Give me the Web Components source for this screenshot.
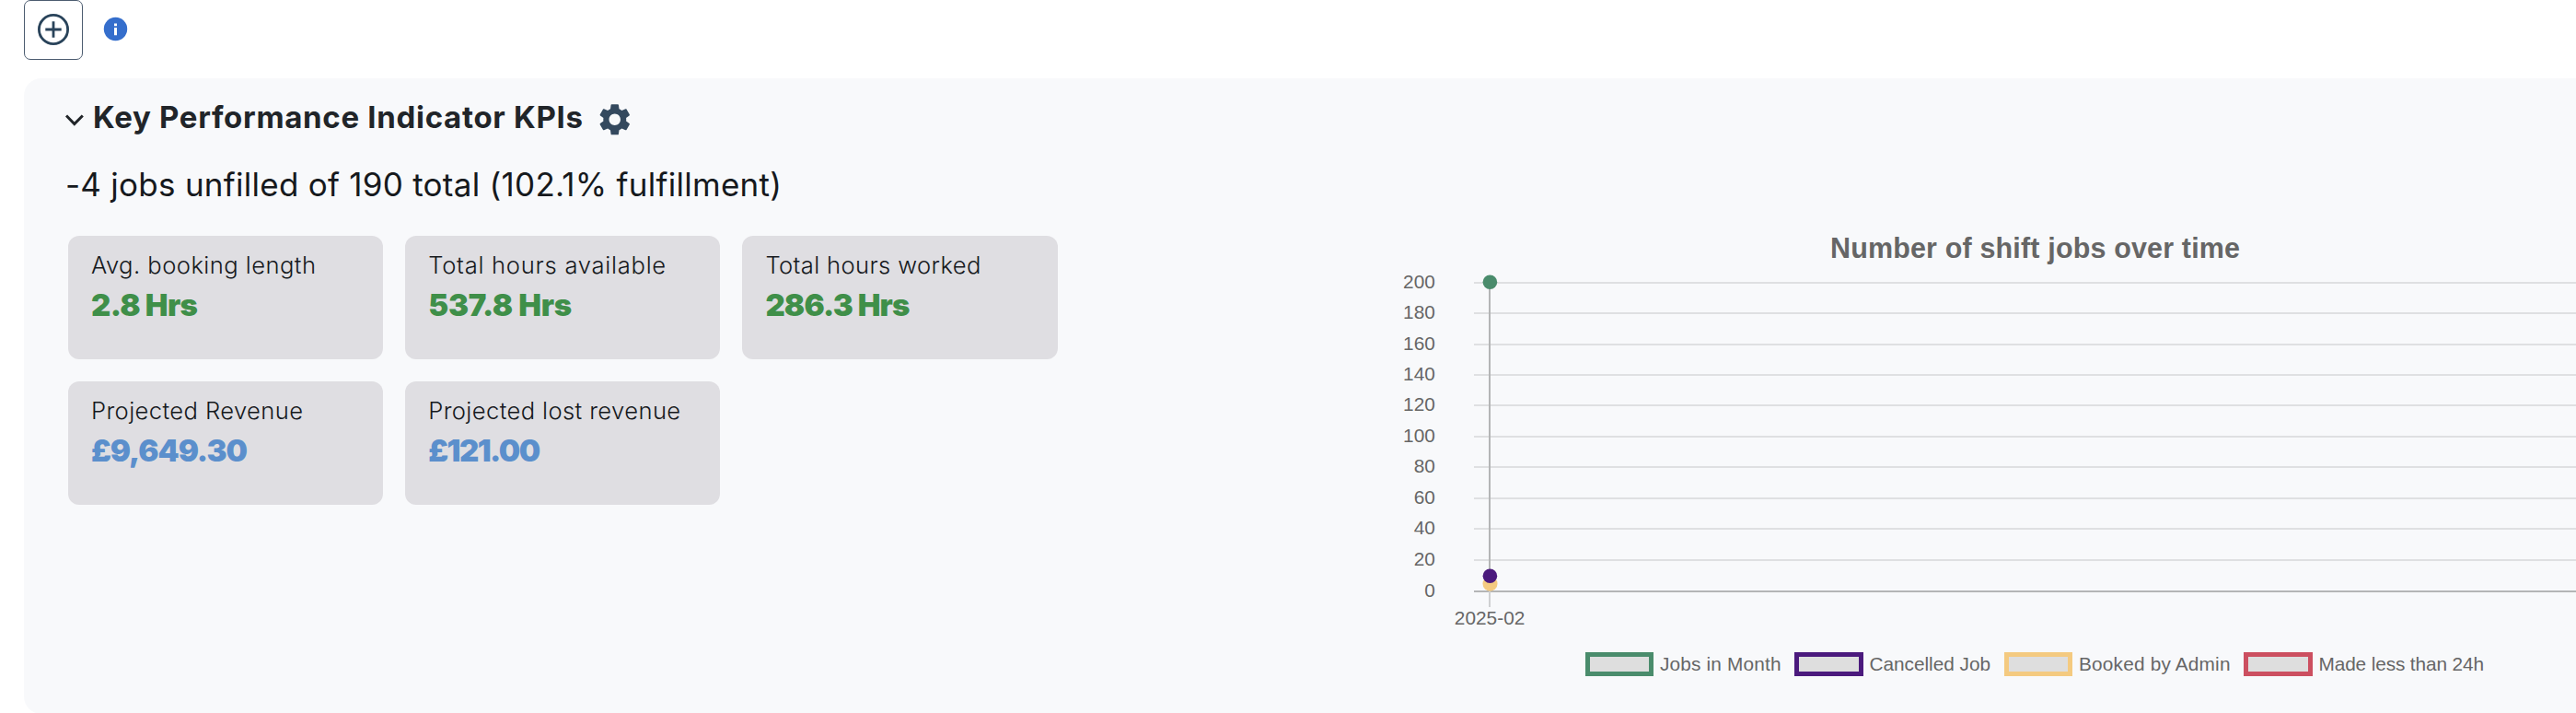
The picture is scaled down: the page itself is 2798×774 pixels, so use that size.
<!DOCTYPE html>
<html lang="en">
<head>
    <meta charset="utf-8">
    <title>KPIs</title>
    <style>
        body {
            background: #fff;
            color: #16191d;
            font-family: Inter, "Liberation Sans", sans-serif;
            margin: 0;
            overflow: hidden;
        }
    </style>
</head>
<body>
<kpi-page></kpi-page>
<script>
// Text set to a given width by spreading its letters
class FitText extends HTMLElement {
    constructor () {
        super()
        this.attachShadow({mode: 'open'})
    }

    connectedCallback () {
        this.shadowRoot.innerHTML = `
            <style>
                :host { display: block; white-space: nowrap }
                span { display: inline-block }
            </style>
            <span>${this.getAttribute('text')}</span>
        `
        const span = this.shadowRoot.querySelector('span')
        const width = Number(this.getAttribute('width'))
        const gaps = this.getAttribute('text').length - 1
        const spacing = (width - span.getBoundingClientRect().width) / gaps
        span.style.letterSpacing = `${spacing}px`
        this.style.width = `${width}px`
    }
}

class PageToolbar extends HTMLElement {
    constructor () {
        super()
        this.attachShadow({mode: 'open'})
    }

    connectedCallback () {
        this.shadowRoot.innerHTML = `
            <style>
                :host {
                    align-items: flex-start;
                    display: flex;
                    gap: 22px;
                    height: 85px;
                    padding-left: 26px;
                }

                button {
                    align-items: center;
                    background: #fff;
                    border: 1px solid #4c5c70;
                    border-radius: 7px;
                    box-sizing: border-box;
                    display: flex;
                    height: 65px;
                    justify-content: center;
                    padding: 0 0 1px;
                    width: 64px;
                }

                .info { margin-top: 18px }
                svg { display: block }
            </style>
            <button aria-label="Add">
                <svg width="36" height="36" viewBox="0 0 36 36" fill="none" stroke="#29435a" stroke-width="2.8">
                    <circle cx="18" cy="18" r="15.6"/>
                    <path d="M18 9.3v17.4M9.3 18h17.4"/>
                </svg>
            </button>
            <svg class="info" width="27" height="27" viewBox="0 0 27 27">
                <circle cx="13.5" cy="13.5" r="12.7" fill="#356ecc"/>
                <path d="M12 7.4h3v2.8h-3zM12 12h3v8.3h-3z" fill="#fff"/>
            </svg>
        `
    }
}

class KpiCard extends HTMLElement {
    constructor () {
        super()
        this.attachShadow({mode: 'open'})
    }

    connectedCallback () {
        this.shadowRoot.innerHTML = `
            <style>
                :host {
                    background: #dfdee2;
                    border-radius: 12px;
                    box-sizing: border-box;
                    display: block;
                    padding: 14.5px 24px 0 25px;
                }

                .label {
                    font-size: 25.6px;
                    font-weight: 350;
                    line-height: 36px;
                }

                .value {
                    color: var(--value-color, #3f8f49);
                    font-size: 33px;
                    font-weight: 900;
                    line-height: 40px;
                    margin-top: 5px;
                }
            </style>
            <fit-text class="label" text="${this.getAttribute('label')}" width="${this.getAttribute('label-width')}"></fit-text>
            <fit-text class="value" text="${this.getAttribute('value')}" width="${this.getAttribute('value-width')}"></fit-text>
        `
    }
}

class LegendItem extends HTMLElement {
    constructor () {
        super()
        this.attachShadow({mode: 'open'})
    }

    connectedCallback () {
        this.shadowRoot.innerHTML = `
            <style>
                :host {
                    align-items: center;
                    display: flex;
                    gap: 7px;
                }

                i {
                    background: #dedede;
                    border: 5px solid ${this.getAttribute('color')};
                    box-sizing: border-box;
                    height: 26px;
                    width: 74.5px;
                }
            </style>
            <i></i>
            <fit-text text="${this.getAttribute('text')}" width="${this.getAttribute('width')}"></fit-text>
        `
    }
}

class JobsChart extends HTMLElement {
    constructor () {
        super()
        this.attachShadow({mode: 'open'})
    }

    style () {
        return `
            <style>
                :host {
                    color: #666;
                    display: block;
                    font-family: "Liberation Sans", Arial, sans-serif;
                    font-size: 20.8px;
                }

                svg { display: block; fill: #666 }

                .title {
                    font-size: 30.5px;
                    font-weight: bold;
                }

                .legend {
                    display: flex;
                    gap: 14.5px;
                    line-height: 26px;
                    padding: 8px 0 0 221.5px;
                }
            </style>
        `
    }

    grid () {
        const lines = [66, 99, 133, 166, 199, 233, 266, 300, 333, 367, 401]
        return lines.map((y, i) => `
            <rect x="101" y="${y}" width="1197" height="2" fill="${i === 10 ? '#b4b5b6' : '#dfe0e2'}"/>
            <text x="58.8" y="${y + 7}" text-anchor="end">${200 - i * 20}</text>
        `).join('')
    }

    render () {
        return `
            ${this.style()}
            <svg width="1298" height="460" viewBox="0 0 1298 460">
                <text class="title" x="488" y="40" textLength="445">Number of shift jobs over time</text>
                ${this.grid()}
                <rect x="117" y="66" width="2" height="336" fill="#b4b5b6"/>
                <rect x="117" y="402" width="2" height="17" fill="#cfd0d2"/>
                <circle cx="118.5" cy="393.7" r="8" fill="#f4ca80"/>
                <circle cx="118.4" cy="385.3" r="7.8" fill="#4b1a7d"/>
                <circle cx="118.4" cy="66.3" r="7.8" fill="#4a8c6c"/>
                <text x="79.8" y="438" textLength="76.5">2025-02</text>
            </svg>
            <div class="legend">
                <legend-item text="Jobs in Month" width="131.5" color="#4a8c6c"></legend-item>
                <legend-item text="Cancelled Job" width="131.5" color="#4b1a7d"></legend-item>
                <legend-item text="Booked by Admin" width="164.5" color="#f4ca80"></legend-item>
                <legend-item text="Made less than 24h" width="179.5" color="#cc4f60"></legend-item>
            </div>
        `
    }

    connectedCallback () {
        this.shadowRoot.innerHTML = this.render()
    }
}

class KpiPanel extends HTMLElement {
    constructor () {
        super()
        this.attachShadow({mode: 'open'})
    }

    style () {
        return `
            <style>
                :host {
                    background: #f8f9fb;
                    border-radius: 19px 0 0 19px;
                    box-sizing: border-box;
                    display: flex;
                    height: 690px;
                    margin-left: 26px;
                    padding-left: 45px;
                }

                .summary {
                    flex: none;
                    padding-top: 20px;
                    width: 1429px;
                }

                header {
                    align-items: center;
                    display: flex;
                    height: 44px;
                }

                .title {
                    color: #212529;
                    font-size: 33px;
                    font-weight: 700;
                    line-height: 44px;
                    margin-left: 10px;
                }

                .gear { margin: 6px 0 0 14px }

                .total {
                    font-size: 35px;
                    line-height: 44px;
                    margin-top: 29px;
                }

                .cards {
                    display: grid;
                    gap: 24px 24px;
                    grid-auto-rows: 134.3px;
                    grid-template-columns: repeat(3, 342.2px);
                    margin: 33.5px 0 0 3px;
                }

                jobs-chart { margin-top: 155px }
                .money { --value-color: #5b8fcc }
            </style>
        `
    }

    render () {
        return `
            ${this.style()}
            <section class="summary">
                <header>
                    <svg width="20" height="20" viewBox="0 0 20 20" fill="none" stroke="#212529" stroke-width="3">
                        <path d="M1 8.5l8.8 9 9-9"/>
                    </svg>
                    <fit-text class="title" text="Key Performance Indicator KPIs" width="532"></fit-text>
                    <svg class="gear" width="41.5" height="41.5" viewBox="0 0 24 24" fill="#34495e">
                        <path d="M19.14 12.94c.04-.3.06-.61.06-.94 0-.32-.02-.64-.07-.94l2.03-1.58c.18-.14.23-.41.12-.61l-1.92-3.32c-.12-.22-.37-.29-.59-.22l-2.39.96c-.5-.38-1.03-.7-1.62-.94l-.36-2.54c-.04-.24-.24-.41-.48-.41h-3.84c-.24 0-.43.17-.47.41l-.36 2.54c-.59.24-1.13.57-1.62.94l-2.39-.96c-.22-.08-.47 0-.59.22L2.74 8.87c-.12.21-.08.47.12.61l2.03 1.58c-.05.3-.09.63-.09.94s.02.64.07.94l-2.03 1.58c-.18.14-.23.41-.12.61l1.92 3.32c.12.22.37.29.59.22l2.39-.96c.5.38 1.03.7 1.62.94l.36 2.54c.05.24.24.41.48.41h3.84c.24 0 .44-.17.47-.41l.36-2.54c.59-.24 1.13-.56 1.62-.94l2.39.96c.22.08.47 0 .59-.22l1.92-3.32c.12-.22.07-.47-.12-.61l-2.01-1.58zM12 15.6c-1.98 0-3.6-1.62-3.6-3.6s1.62-3.6 3.6-3.6 3.6 1.62 3.6 3.6-1.62 3.6-3.6 3.6z"/>
                    </svg>
                </header>
                <fit-text class="total" text="-4 jobs unfilled of 190 total (102.1% fulfillment)" width="778"></fit-text>
                <div class="cards">
                    <kpi-card label="Avg. booking length" label-width="244" value="2.8 Hrs" value-width="116"></kpi-card>
                    <kpi-card label="Total hours available" label-width="258" value="537.8 Hrs" value-width="156"></kpi-card>
                    <kpi-card label="Total hours worked" label-width="234" value="286.3 Hrs" value-width="157"></kpi-card>
                    <kpi-card class="money" label="Projected Revenue" label-width="230" value="£9,649.30" value-width="170"></kpi-card>
                    <kpi-card class="money" label="Projected lost revenue" label-width="274" value="£121.00" value-width="122"></kpi-card>
                </div>
            </section>
            <jobs-chart></jobs-chart>
        `
    }

    connectedCallback () {
        this.shadowRoot.innerHTML = this.render()
    }
}

class KpiPage extends HTMLElement {
    constructor () {
        super()
        this.attachShadow({mode: 'open'})
    }

    connectedCallback () {
        this.shadowRoot.innerHTML = `
            <style>
                :host { display: block; height: 774px; overflow: hidden }
            </style>
            <page-toolbar></page-toolbar>
            <kpi-panel></kpi-panel>
        `
    }
}

window.customElements.define('fit-text', FitText)
window.customElements.define('page-toolbar', PageToolbar)
window.customElements.define('kpi-card', KpiCard)
window.customElements.define('legend-item', LegendItem)
window.customElements.define('jobs-chart', JobsChart)
window.customElements.define('kpi-panel', KpiPanel)
window.customElements.define('kpi-page', KpiPage)
</script>
</body>
</html>
